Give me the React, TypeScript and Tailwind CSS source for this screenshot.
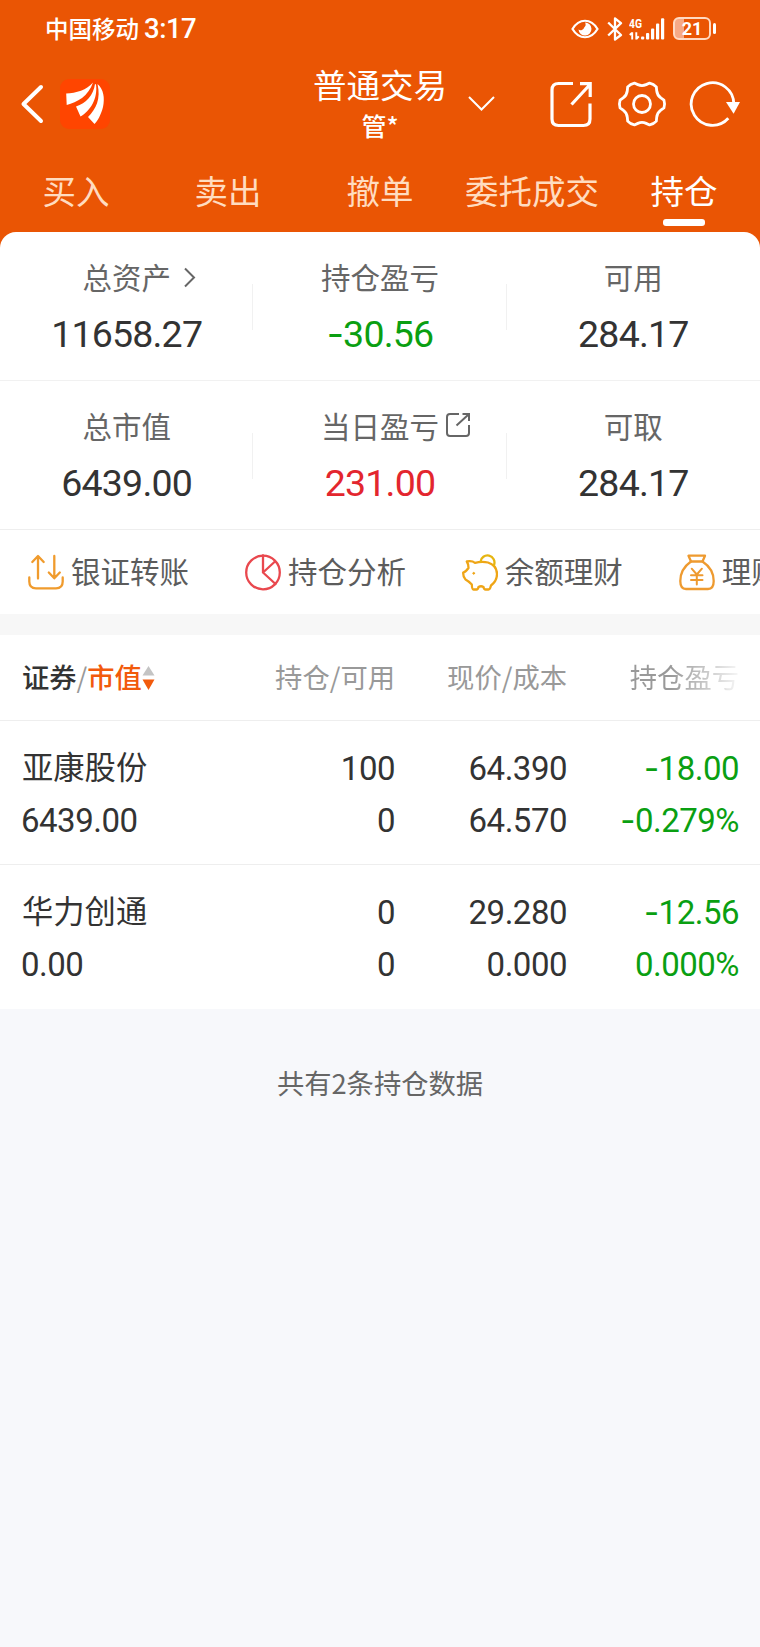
import type { ReactNode } from "react";

const CJK = "font-['Noto_Sans_CJK_SC',sans-serif]";
const NUM = "font-[Roboto,'Noto_Sans_CJK_SC',sans-serif]";

function Amount({ value }: { value: string }) {
  const negative = value.startsWith("-");
  return (
    <>
      {negative && <span className="font-[Inter,sans-serif] leading-none">-</span>}
      {negative ? value.slice(1) : value}
    </>
  );
}

function StatusBar() {
  return (
    <div className="flex h-[57px] items-center pl-[45px] pr-[44px] text-white">
      <span className="text-[23.5px] leading-none font-medium">中国移动</span>
      <span className={`${NUM} ml-[5px] mt-px text-[27.5px] leading-none font-medium tracking-[-0.5px]`}>3:17</span>
      <div className="ml-auto flex items-center">
        <svg width="28" height="20" viewBox="0 0 28 20" fill="none" stroke="#fff" strokeWidth="2.2">
          <path d="M1.500 10C8 -1 20 -1 26.500 10C20 21 8 21 1.500 10Z" />
          <path d="M14 3.500A6.500 6.500 0 1 1 7.500 10.500A3.600 3.600 0 0 0 13.200 8.500A4 4 0 0 0 14 3.500Z" fill="#fff" stroke="none" />
        </svg>
        <svg className="ml-[8px]" width="16" height="24" viewBox="0 0 16 24" fill="none" stroke="#fff" strokeWidth="2.3" strokeLinejoin="round">
          <path d="M1.2 5.5L14 18L8 22.500V1.500L14 6.200L1.200 18.500" />
        </svg>
        <svg className="ml-[6px]" width="37" height="24" viewBox="0 0 37 24" fill="#fff">
          <text x="0" y="10.5" fontSize="13.5" fontWeight="700" fontFamily="Roboto" textLength="13" lengthAdjust="spacingAndGlyphs">4G</text>
          <path d="M3.2 15.2V22.500M3.200 15.600L0.800 18M7.300 15.200V22.500M7.300 22L9.800 19.400" stroke="#fff" strokeWidth="1.900" fill="none" />
          <rect x="12" y="19.400" width="3.200" height="3.200" rx="1" />
          <rect x="17" y="16" width="3.200" height="6.600" rx="1" />
          <rect x="22" y="11.500" width="3.200" height="11.100" rx="1" />
          <rect x="27" y="6.500" width="3.200" height="16.100" rx="1" />
          <rect x="32" y="1.200" width="3.200" height="21.400" rx="1" />
        </svg>
        <div className="ml-[7px] flex h-[23px] w-[38px] items-center rounded-[6px] border-2 border-[#ffd9c2] bg-linear-to-r from-[#f6a986] from-28% to-transparent to-28% bg-origin-border">
          <span className={`${NUM} w-full text-center text-[18px] leading-none font-bold`}>21</span>
        </div>
        <div className="ml-[2px] h-[11px] w-[3px] rounded-sm bg-white" />
      </div>
    </div>
  );
}

function gearPath(cx: number, cy: number) {
  const at = (radius: number, deg: number) => {
    const a = (deg * Math.PI) / 180;
    return `${(cx + radius * Math.cos(a)).toFixed(2)} ${(cy + radius * Math.sin(a)).toFixed(2)}`;
  };
  let d = "";
  for (let lobe = 0; lobe < 360; lobe += 60) {
    d += `${lobe === 0 ? "M" : "L"}${at(22.3, lobe - 10)}Q${at(23.2, lobe)} ${at(22.3, lobe + 10)}L${at(19.8, lobe + 18)}Q${at(17.5, lobe + 30)} ${at(19.8, lobe + 42)}`;
  }
  return d + "Z";
}

function TitleBar() {
  return (
    <div className="flex h-[94px] items-center text-white">
      <div className="flex w-[312px] items-center pl-[19px]">
        <svg width="26" height="42" viewBox="0 0 26 42" fill="none" stroke="#fff" strokeWidth="4" strokeLinecap="round" strokeLinejoin="round">
          <path d="M22 4L4.500 21L22 38" />
        </svg>
        <svg className="ml-[15px]" width="50" height="50" viewBox="0 0 50 50">
          <rect width="50" height="50" rx="9" fill="#ff4500" />
          <g fill="#fff">
            <path d="M33 3.500C27 11 16 14 6.200 14.500L6.700 26C17 23.500 28.500 17 33 3.500Z" />
            <path d="M35 5C33.500 16 26 24.500 16 27.500L20.500 37.500C30 32 38 20 36 5.500Z" />
            <path d="M37.500 5C43.500 10 45 19 43 28C41 36 37.500 42 34.500 45L28 38C36 30 41 20 37.500 5Z" />
          </g>
        </svg>
      </div>
      <div className="flex w-[136px] flex-col items-center whitespace-nowrap">
        <span className="text-[33.5px] leading-[42px]">普通交易</span>
        <span className="text-[25px] leading-[40px] font-medium">管*</span>
      </div>
      <div className="flex w-[312px] items-center">
        <svg className="ml-[20px]" width="28" height="16" viewBox="0 0 28 16" fill="none" stroke="#fff" strokeWidth="2">
          <path d="M1 1L13.500 13.500L26 1" />
        </svg>
        <svg className="ml-[53px]" width="44" height="48" viewBox="0 0 44 48" fill="none" stroke="#fff" strokeWidth="3.2">
          <path d="M24 3.500H9.500Q3 3.500 3 10V39Q3 45.500 9.500 45.500H34.500Q41 45.500 41 39V23.500" />
          <path d="M22.500 24.500L41 4.500M31 3.700H41.200V17" />
        </svg>
        <svg className="ml-[24px]" width="50" height="48" viewBox="0 0 50 48" fill="none" stroke="#fff" strokeWidth="2.800" strokeLinejoin="round">
          <path d={gearPath(25, 24)} />
          <circle cx="25" cy="24" r="8.500" />
        </svg>
        <svg className="ml-[22px]" width="52" height="48" viewBox="0 0 52 48" fill="none" stroke="#fff" strokeWidth="2.800">
          <path d="M39.300 38.300A21.300 21.300 0 1 1 44.800 24" />
          <path d="M37 22H51L44.600 33.800Z" fill="#fff" stroke="none" />
        </svg>
      </div>
    </div>
  );
}

const tabs = ["买入", "卖出", "撤单", "委托成交", "持仓"];

function Tabs() {
  return (
    <div className="grid h-[81px] grid-cols-5 text-[33.5px] leading-[50px]">
      {tabs.map((tab, i) => {
        const active = i === tabs.length - 1;
        return (
          <div key={tab} className={`flex flex-col items-center whitespace-nowrap pt-[14px] ${active ? "text-white" : "text-[#ffdcc0]"}`}>
            {tab}
            {active && <div className="mt-[4px] h-[7px] w-[42px] rounded-[3px] bg-white" />}
          </div>
        );
      })}
    </div>
  );
}

interface StatProps {
  label: string;
  value: string;
  color?: string;
  icon?: ReactNode;
  divider?: boolean;
}

function Stat({ label, value, color = "text-[#333]", icon, divider }: StatProps) {
  return (
    <div className="relative flex flex-col items-center pt-[23px]">
      <div className="relative text-[29.500px] leading-[42px] text-[#666]">
        {label}
        {icon}
      </div>
      <div className={`${NUM} mt-[15px] text-[37.500px] leading-[44px] tracking-[-0.800px] ${color}`}>
        <Amount value={value} />
      </div>
      {divider && <div className="absolute top-[52px] right-0 h-[46px] w-px bg-[#f1f1f1]" />}
    </div>
  );
}

function Summary() {
  return (
    <div className="bg-[#ea5504]">
      <div className="rounded-t-[16px] bg-white">
        <div className="grid h-[149px] grid-cols-3 border-b border-[#f1f1f1]">
          <Stat
            label="总资产"
            value="11658.27"
            divider
            icon={
              <svg className="absolute top-[12px] left-[101px]" width="14" height="22" viewBox="0 0 14 22" fill="none" stroke="#666" strokeWidth="2">
                <path d="M2 1.500L11 10.500L2 19.500" />
              </svg>
            }
          />
          <Stat label="持仓盈亏" value="-30.56" color="text-[#0a9f12]" divider />
          <Stat label="可用" value="284.17" />
        </div>
        <div className="grid h-[149px] grid-cols-3 border-b border-[#eee]">
          <Stat label="总市值" value="6439.00" divider />
          <Stat
            label="当日盈亏"
            value="231.00"
            color="text-[#e3262e]"
            divider
            icon={
              <svg className="absolute top-[8px] left-[124px]" width="26" height="26" viewBox="0 0 26 26" fill="none" stroke="#666" strokeWidth="2">
                <path d="M14 2H5Q2 2 2 5V21Q2 24 5 24H21Q24 24 24 21V13" />
                <path d="M11.500 13.500L23.500 2.500M17.500 2H24V9" />
              </svg>
            }
          />
          <Stat label="可取" value="284.17" />
        </div>
      </div>
    </div>
  );
}

const shortcuts: { label: string; icon: ReactNode }[] = [
  {
    label: "银证转账",
    icon: (
      <g stroke="#f09b2d">
        <path d="M1.300 23.500V27.500Q1.300 34.300 8 34.300H28Q34.700 34.300 34.700 27.500V23.500" />
        <path d="M10 24.500V2.500M4.300 8L10 2L15.700 8M26.300 2V23.500M20.800 18.500L26.300 24.300L31.800 18.500" />
      </g>
    ),
  },
  {
    label: "持仓分析",
    icon: (
      <g stroke="#e9484e">
        <circle cx="18" cy="18.500" r="16.800" />
        <path d="M18 1.500V18.500L30.500 30M18 18.500L30 7.500" />
      </g>
    ),
  },
  {
    label: "余额理财",
    icon: (
      <g stroke="#efa516">
        <path d="M6.500 14Q6.500 10 4.800 7.500Q10 6.500 13 8.800Q20 7 26 8.500Q35 11.500 35 20Q35 27 29 31.500Q28 35.500 26.500 35.500H23.500Q22 35.500 21.500 33Q19 31.500 16.500 33Q16 35.500 14.500 35.500H11.500Q10 35.500 9.800 30.500Q6.500 27 3.500 25.500Q1 23 1.200 18.500Q3.500 18 6.500 14Z" />
        <path d="M18.500 7.800A7 7 0 1 1 32 11" stroke="#e6b511" />
        <circle cx="11.700" cy="19.300" r="0.900" fill="#efa516" stroke="#efa516" strokeWidth="1" />
      </g>
    ),
  },
  {
    label: "理财",
    icon: (
      <g stroke="#ee9a2f">
        <path d="M9.500 1.700H26L23.500 7.500H12Z" />
        <path d="M12 7.500Q1.300 15 1.300 27Q1.300 35 7 35H29Q34.700 35 34.700 27Q34.700 15 23.500 7.500" />
        <path d="M12.700 14.700L17.800 20.500L22.900 14.700M17.800 20.500V30.500M12 21.300H23.500M12 26H23.500" strokeWidth="2" />
      </g>
    ),
  },
];

function Shortcuts() {
  return (
    <div className="flex h-[84px] overflow-hidden bg-white pl-[28px]">
      {shortcuts.map(({ label, icon }) => (
        <div key={label} className="flex w-[216.900px] shrink-0 items-center">
          <svg width="36" height="37" viewBox="0 0 36 37" fill="none" strokeWidth="2.300" strokeLinecap="round" strokeLinejoin="round">
            {icon}
          </svg>
          <span className="mb-[4px] ml-[7px] text-[29.500px] leading-[42px] whitespace-nowrap text-[#5c5c5c]">{label}</span>
        </div>
      ))}
    </div>
  );
}

const holdings = [
  { name: "亚康股份", market: "6439.00", held: "100", free: "0", price: "64.390", cost: "64.570", profit: "-18.00", rate: "-0.279%" },
  { name: "华力创通", market: "0.00", held: "0", free: "0", price: "29.280", cost: "0.000", profit: "-12.56", rate: "0.000%" },
];

function Holdings() {
  const grid = "grid grid-cols-[201px_172px_172px_172px] pl-[22px]";
  const pair = "flex flex-col items-end";
  return (
    <div className="bg-white">
      <div className={`${grid} h-[86px] items-center border-b border-[#eee] pb-[2px] text-right text-[27.300px] whitespace-nowrap text-[#999]`}>
        <div className="flex items-center">
          <span className="font-medium text-[#333]">证券</span>
          <span>/</span>
          <span className="font-medium text-[#f25a0c]">市值</span>
          <svg className="mt-[3px]" width="13" height="26" viewBox="0 0 13 26">
            <path d="M6.500 1L12.500 10.500H0.500Z" fill="#c4c4c4" />
            <path d="M6.500 25L12.500 14.500H0.500Z" fill="#f25a0c" />
          </svg>
        </div>
        <div>持仓/可用</div>
        <div>现价/成本</div>
        <div className="bg-linear-to-r from-[#999] from-60% to-[#f7f7f7] bg-clip-text text-transparent">持仓盈亏</div>
      </div>
      {holdings.map((h) => (
        <div key={h.name} className={`${grid} ${NUM} h-[144px] border-b border-[#eee] pt-[22px] text-[33px] leading-[51.500px] tracking-[-0.500px] text-[#333] last:border-b-0`}>
          <div className="flex flex-col">
            <span className={`${CJK} mb-[5.500px] text-[31.300px] leading-[46px] tracking-normal`}>{h.name}</span>
            <span className="-ml-px">{h.market}</span>
          </div>
          <div className={pair}>
            <span>{h.held}</span>
            <span>{h.free}</span>
          </div>
          <div className={pair}>
            <span>{h.price}</span>
            <span>{h.cost}</span>
          </div>
          <div className={`${pair} text-[#0a9f12]`}>
            <span><Amount value={h.profit} /></span>
            <span><Amount value={h.rate} /></span>
          </div>
        </div>
      ))}
    </div>
  );
}

export default function App() {
  return (
    <div className={`${CJK} flex h-[1647px] w-[760px] flex-col overflow-hidden bg-[#f7f8fb]`}>
      <div className="bg-[#ea5504]">
        <StatusBar />
        <TitleBar />
        <Tabs />
      </div>
      <Summary />
      <Shortcuts />
      <div className="h-[21px] bg-[#f7f7f7]" />
      <Holdings />
      <div className="pt-[53px] text-center text-[27.300px] leading-[40px] text-[#666]">共有2条持仓数据</div>
    </div>
  );
}
